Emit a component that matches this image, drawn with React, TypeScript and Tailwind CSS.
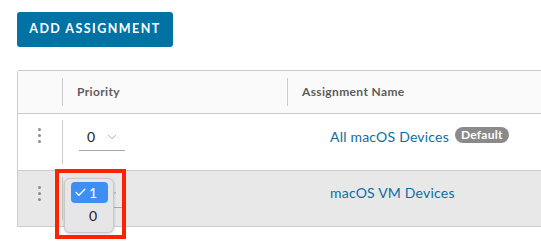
import { Check, ChevronDown } from "lucide-react";

const font = { fontFamily: "Lato, 'Noto Sans', 'Liberation Sans', sans-serif" };

function Kebab() {
  return (
    <div className="flex flex-col items-center gap-[3px]">
      <span className="w-[3px] h-[3px] rounded-full bg-[#8c8c8c]" />
      <span className="w-[3px] h-[3px] rounded-full bg-[#8c8c8c]" />
      <span className="w-[3px] h-[3px] rounded-full bg-[#8c8c8c]" />
    </div>
  );
}

// value is left out where the open popup covers the select
function PrioritySelect({ value }: { value?: string }) {
  return (
    <div className="ml-[16px] mt-[3px] w-[46px] h-[28px] flex items-center border-b border-[#a8a8a8]">
      <span className="ml-[8px] w-[8px] text-[14px] text-[#222]">{value}</span>
      <ChevronDown className="ml-[10px] w-[14px] h-[14px] text-[#9a9a9a]" strokeWidth={1.5} />
    </div>
  );
}

export default function App() {
  return (
    <div className="w-[541px] h-[242px] bg-white overflow-hidden relative" style={font}>
      <div className="pt-[12px] pl-[17px]">
        <button className="h-[35px] w-[156px] rounded-[3px] bg-[#0072a3] text-white text-[12.5px] font-bold tracking-[0.115em]">
          ADD ASSIGNMENT
        </button>
      </div>

      <div className="ml-[17px] mt-[23px] border-l border-t border-[#cccccc] rounded-tl-[3px]">
        {/* header */}
        <div className="flex h-[43px] bg-[#fafafa] border-b border-[#cccccc] items-center text-[12px] font-bold text-[#5c5c5c] tracking-[0.03em]">
          <div className="w-[45px] h-[28px] border-r border-[#cccccc]" />
          <div className="w-[224px] pl-[14px]">Priority</div>
          <div className="h-[28px] border-r border-[#cccccc]" />
          <div className="pl-[14px]">Assignment Name</div>
        </div>

        {/* row 1 */}
        <div className="flex h-[57px] border-b border-[#cccccc]">
          <div className="w-[45px] h-full flex items-start justify-center pt-[14px] pr-[2px]">
            <Kebab />
          </div>
          <div className="w-[225px] flex items-start border-l border-[#cccccc] my-[6px] -ml-px">
            <PrioritySelect value="0" />
          </div>
          <div className="flex items-start pt-[12px] pl-[43px] text-[14px] tracking-[0.015em] text-[#0a6fa0]">
            <span>All macOS Devices</span>
            <span className="ml-[6px] mt-[1px] px-[6px] h-[16px] leading-[16px] rounded-full bg-[#8a8a8a] text-white text-[12px] font-bold tracking-[0.02em]">
              Default
            </span>
          </div>
        </div>

        {/* row 2 */}
        <div className="flex h-[56px] bg-[#e8e8e8] border-b border-[#cccccc]">
          <div className="w-[45px] h-full flex items-start justify-center pt-[15px] pr-[2px]">
            <Kebab />
          </div>
          <div className="w-[225px] flex items-start border-l border-[#c4c4c4] my-[6px] -ml-px">
            <PrioritySelect />
          </div>
          <div className="flex items-start pt-[11px] pl-[43px] text-[14px] tracking-[0.015em] text-[#0a6fa0]">
            macOS VM Devices
          </div>
        </div>
      </div>

      {/* native select popup */}
      <div className="absolute left-[64px] top-[178px] w-[50px] h-[55px] rounded-[6px] bg-[#e6e6e9] border border-[#c9c9cc] shadow-[0_1px_3px_rgba(0,0,0,0.2)] pl-[6px] pr-[5px] pt-[3px]">
        <div className="h-[21px] rounded-[4px] bg-[#3d8ff4] text-white flex items-center text-[14px]">
          <Check className="ml-[3px] w-[13px] h-[13px]" strokeWidth={2.5} />
          <span className="ml-[2px]">1</span>
        </div>
        <div className="h-[24px] flex items-center text-[14px] text-[#222] pl-[18px]">0</div>
      </div>

      {/* highlight box */}
      <div className="absolute left-[55px] top-[169px] w-[71px] h-[70px] border-[4px] border-[#ff2200]" />
    </div>
  );
}
